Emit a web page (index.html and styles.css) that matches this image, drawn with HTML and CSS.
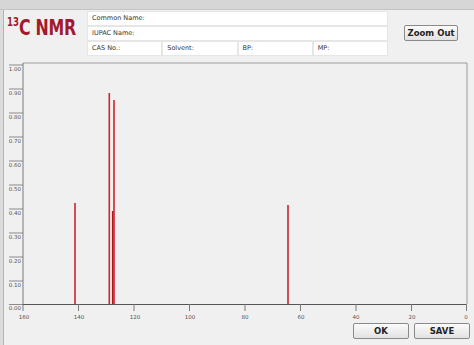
FILE: index.html
```html
<!DOCTYPE html>
<html>

<head>
    <title>13C NMR</title>
    <link rel="stylesheet" href="styles.css">
</head>

<body>
    <div class="titlebar"></div>
    <div class="panel">
        <div class="header">
            <div class="title-box">
                <h1 class="title"><sup>13</sup>C NMR</h1>
            </div>
            <div class="info">
                <div class="cell wide">Common Name:</div>
                <div class="cell wide">IUPAC Name:</div>
                <div class="cell">CAS No.:</div>
                <div class="cell">Solvent:</div>
                <div class="cell">BP:</div>
                <div class="cell">MP:</div>
            </div>
            <button class="btn zoom">Zoom Out</button>
        </div>

        <svg class="plot" width="471" height="260" viewBox="3 62 471 260">
            <!-- frame -->
            <polyline points="22,63 466,63 466,304" fill="none" stroke="#9a9a9a" stroke-width="1"/>
            <!-- y ticks -->
            <g stroke="#8a8a8a" stroke-width="1">
                <line x1="8" y1="65" x2="22" y2="65"/>
                <line x1="8" y1="89" x2="22" y2="89"/>
                <line x1="8" y1="113" x2="22" y2="113"/>
                <line x1="8" y1="137" x2="22" y2="137"/>
                <line x1="8" y1="161" x2="22" y2="161"/>
                <line x1="8" y1="185" x2="22" y2="185"/>
                <line x1="8" y1="209" x2="22" y2="209"/>
                <line x1="8" y1="233" x2="22" y2="233"/>
                <line x1="8" y1="257" x2="22" y2="257"/>
                <line x1="8" y1="281" x2="22" y2="281"/>
                <line x1="8" y1="304.5" x2="22" y2="304.5"/>
            </g>
            <g class="ylab" text-anchor="end">
                <text x="20" y="71">1.00</text>
                <text x="20" y="95">0.90</text>
                <text x="20" y="119">0.80</text>
                <text x="20" y="143">0.70</text>
                <text x="20" y="167">0.60</text>
                <text x="20" y="191">0.50</text>
                <text x="20" y="215">0.40</text>
                <text x="20" y="239">0.30</text>
                <text x="20" y="263">0.20</text>
                <text x="20" y="287">0.10</text>
                <text x="20" y="310">0.00</text>
            </g>
            <!-- peaks -->
            <g stroke="#cc2430" stroke-width="1.6">
                <line x1="74" y1="203" x2="74" y2="304"/>
                <line x1="108.3" y1="93" x2="108.3" y2="304"/>
                <line x1="113" y1="100" x2="113" y2="304"/>
                <line x1="287" y1="205" x2="287" y2="304"/>
            </g>
            <line x1="111.6" y1="211" x2="111.6" y2="304" stroke="#b0141c" stroke-width="1.4"/>
            <!-- axes -->
            <line x1="22" y1="63" x2="22" y2="311" stroke="#7a7a7a" stroke-width="1"/>
            <line x1="22" y1="304.5" x2="466" y2="304.5" stroke="#555" stroke-width="1"/>
            <g stroke="#7a7a7a" stroke-width="1">
                <line x1="77.5" y1="304" x2="77.5" y2="311"/>
                <line x1="133" y1="304" x2="133" y2="311"/>
                <line x1="188.5" y1="304" x2="188.5" y2="311"/>
                <line x1="244" y1="304" x2="244" y2="311"/>
                <line x1="299.5" y1="304" x2="299.5" y2="311"/>
                <line x1="355" y1="304" x2="355" y2="311"/>
                <line x1="410.5" y1="304" x2="410.5" y2="311"/>
                <line x1="465.5" y1="304" x2="465.5" y2="311"/>
            </g>
            <g class="xlab" text-anchor="middle">
                <text x="23" y="319">160</text>
                <text x="78" y="319">140</text>
                <text x="134" y="319">120</text>
                <text x="189" y="319">100</text>
                <text x="244" y="319">80</text>
                <text x="300" y="319">60</text>
                <text x="355" y="319">40</text>
                <text x="411" y="319">20</text>
                <text x="465" y="319">0</text>
            </g>
        </svg>

        <div class="footer">
            <button class="btn wide-btn">OK</button>
            <button class="btn wide-btn">SAVE</button>
        </div>
    </div>
</body>

</html>
```

FILE: styles.css
```css
body {
    margin: 0;
    width: 474px;
    height: 345px;
    overflow: hidden;
    background-color: #dcdcdc;
    font-family: "DejaVu Sans", sans-serif;
}

.titlebar {
    height: 9px;
    background-color: #d6d6d6;
    border-bottom: 1px solid #c4c4c4;
}

.panel {
    margin-left: 3px;
    height: 335px;
    border-left: 1px solid #b4b4b4;
    background-color: #f0f0f0;
    display: flex;
    flex-direction: column;
}

.header {
    height: 52px;
    display: flex;
    align-items: flex-start;
}

.title-box {
    width: 83px;
    flex: none;
    padding: 4px 0 0 3px;
    box-sizing: border-box;
}

.title {
    display: inline-block;
    margin: 0;
    font-size: 22px;
    font-weight: bold;
    color: #a3192d;
    letter-spacing: -0.4px;
    line-height: 28px;
    white-space: nowrap;
    transform: scaleX(0.72);
    transform-origin: left center;
}

.title sup {
    font-size: 12px;
    vertical-align: 9px;
    line-height: 0;
    letter-spacing: 0;
}

.info {
    margin-top: 1px;
    width: 301px;
    flex: none;
    display: grid;
    grid-template-columns: repeat(4, 1fr);
    grid-auto-rows: 15px;
    background-color: #f0f0f0;
}

.cell {
    background-color: #fff;
    border: 1px solid #e6e6e6;
    font-size: 6.5px;
    color: #333;
    padding-left: 4px;
    line-height: 13px;
    box-sizing: border-box;
    white-space: nowrap;
}

.cell.wide {
    grid-column: span 4;
}

.btn {
    font-family: inherit;
    font-weight: bold;
    color: #222;
    border: 1px solid #8a8a8a;
    border-radius: 2px;
    background: linear-gradient(#fbfbfb, #e2e2e2);
    padding: 0;
    box-sizing: border-box;
}

.zoom {
    margin-left: 16px;
    margin-top: 15px;
    width: 54px;
    height: 16px;
    font-size: 8.5px;
}

.plot {
    display: block;
}

.plot text {
    font-family: "DejaVu Sans", sans-serif;
    font-size: 5.5px;
    fill: #555;
}

.footer {
    display: flex;
    justify-content: flex-end;
    gap: 5px;
    padding-right: 4px;
    padding-top: 1px;
}

.wide-btn {
    width: 56px;
    height: 16px;
    font-size: 8.5px;
}
```
